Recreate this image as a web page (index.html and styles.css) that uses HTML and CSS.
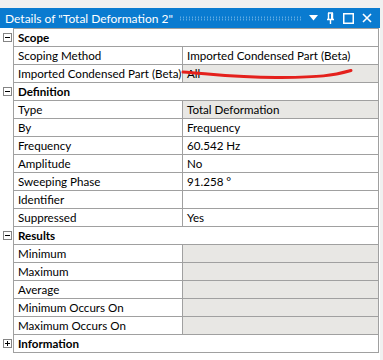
FILE: index.html
```html
<!DOCTYPE html>
<html lang="en">
<head>
    <meta charset="UTF-8">
    <title>Details of "Total Deformation 2"</title>
    <link rel="stylesheet" href="styles.css">
</head>
<body>
    <div class="panel">
        <div class="titlebar">
            <span class="title">Details of "Total Deformation 2"</span>
            <span class="grip"></span>
            <span class="tools">
                <svg width="9" height="6" viewBox="0 0 9 6"><path d="M0 0H9L4.5 5.5Z" fill="#fff"/></svg>
                <svg width="9" height="12" viewBox="0 0 9 12"><path d="M2 1H7M2.5 1V7M6.5 1V7M1 7.5H8M4.5 7.5V12" stroke="#fff" stroke-width="1.4" fill="none"/><path d="M5 1.5H6.5V7H5Z" fill="#fff"/></svg>
                <svg width="11" height="11" viewBox="0 0 11 11"><rect x="0.75" y="0.75" width="9.5" height="9.5" stroke="#fff" stroke-width="1.5" fill="none"/></svg>
                <svg width="10" height="10" viewBox="0 0 10 10"><path d="M1 1L9 9M9 1L1 9" stroke="#fff" stroke-width="1.6"/></svg>
            </span>
        </div>

        <div class="grid">
            <div class="row head"><span class="toggle minus"></span><div class="cell wide">Scope</div></div>
            <div class="row"><div class="cell">Scoping Method</div><div class="cell">Imported Condensed Part (Beta)</div></div>
            <div class="row"><div class="cell">Imported Condensed Part (Beta)</div><div class="cell ro">All</div></div>

            <div class="row head"><span class="toggle minus"></span><div class="cell wide">Definition</div></div>
            <div class="row"><div class="cell">Type</div><div class="cell ro">Total Deformation</div></div>
            <div class="row"><div class="cell">By</div><div class="cell">Frequency</div></div>
            <div class="row"><div class="cell">Frequency</div><div class="cell">60.542 Hz</div></div>
            <div class="row"><div class="cell">Amplitude</div><div class="cell">No</div></div>
            <div class="row"><div class="cell">Sweeping Phase</div><div class="cell">91.258 °</div></div>
            <div class="row"><div class="cell">Identifier</div><div class="cell"></div></div>
            <div class="row"><div class="cell">Suppressed</div><div class="cell">Yes</div></div>

            <div class="row head"><span class="toggle minus"></span><div class="cell wide">Results</div></div>
            <div class="row"><div class="cell">Minimum</div><div class="cell ro"></div></div>
            <div class="row"><div class="cell">Maximum</div><div class="cell ro"></div></div>
            <div class="row"><div class="cell">Average</div><div class="cell ro"></div></div>
            <div class="row"><div class="cell">Minimum Occurs On</div><div class="cell ro"></div></div>
            <div class="row"><div class="cell">Maximum Occurs On</div><div class="cell ro"></div></div>

            <div class="row head"><span class="toggle plus"></span><div class="cell wide">Information</div></div>
        </div>

        <!-- red pen mark drawn over the Scoping Method value -->
        <svg class="mark" width="174" height="14" viewBox="0 0 174 14">
            <path d="M2 4C30 6 60 10 100 9.5S150 8 170 2.5" stroke="#e4201c" stroke-width="3" fill="none" stroke-linecap="round"/>
        </svg>
    </div>
</body>
</html>
```

FILE: styles.css
```css
body {
    margin: 0;
    background-color: #f0f0f0;
    font-family: Lato, "Noto Sans", sans-serif;
    font-size: 11.6px;
    color: #000;
}

.panel {
    position: relative;
    width: 380px;
    height: 352px;
    margin-top: 8px;
    background-color: #fff;
}

.titlebar {
    display: flex;
    align-items: center;
    height: 20px;
    padding-left: 5px;
    background-color: #0a7bd0;
    color: #fff;
}

.title {
    white-space: nowrap;
    font-size: 12px;
}

.grip {
    flex: 1;
    height: 5px;
    margin: 0 6px;
    background-image: radial-gradient(circle, rgba(255, 255, 255, .45) 0.7px, transparent 0.9px);
    background-size: 3px 2.5px;
}

.tools {
    display: flex;
    align-items: center;
    gap: 8px;
    padding-right: 8px;
}

.grid {
    border-top: 1px solid #a0a0a0;
    margin-left: 13px;
    width: 366px;
    border-left: 1px solid #a0a0a0;
    border-right: 1px solid #a0a0a0;
    box-sizing: border-box;
    position: relative;
}

.row {
    display: grid;
    grid-template-columns: 168px 1fr;
    height: 18px;
    border-bottom: 1px solid #a0a0a0;
    box-sizing: border-box;
    position: relative;
}

.cell {
    padding-left: 4px;
    line-height: 17px;
    white-space: nowrap;
    overflow: hidden;
}

.cell + .cell {
    border-left: 1px solid #a0a0a0;
}

.cell.ro {
    background-color: #e8e7e4;
}

.head .cell.wide {
    grid-column: 1 / 3;
    font-weight: 700;
}

.toggle {
    position: absolute;
    left: -11px;
    top: 4px;
    width: 9px;
    height: 9px;
    border: 1px solid #848484;
    box-sizing: border-box;
    background-color: #fff;
}

.toggle::before,
.toggle.plus::after {
    content: "";
    position: absolute;
    left: 1px;
    top: 3px;
    width: 5px;
    height: 1px;
    background-color: #000;
}

.toggle.plus::after {
    left: 3px;
    top: 1px;
    width: 1px;
    height: 5px;
}

.mark {
    position: absolute;
    left: 181px;
    top: 60px;
}
```
